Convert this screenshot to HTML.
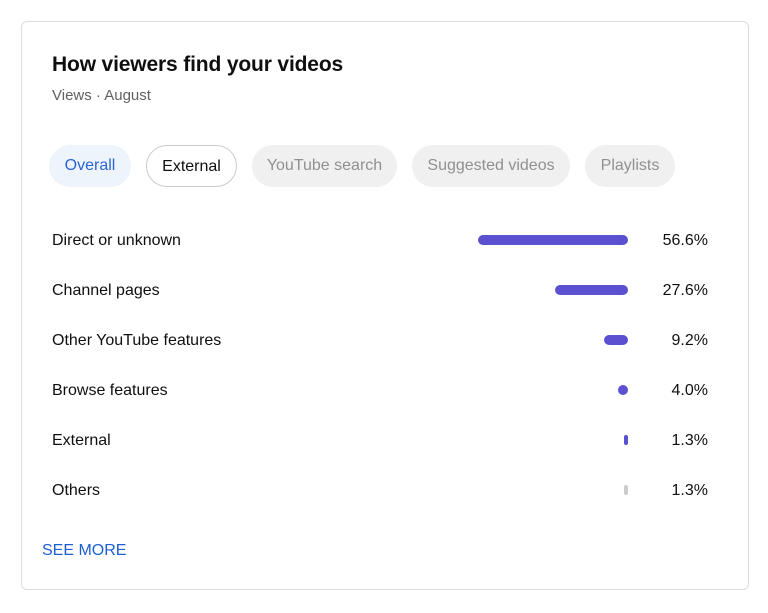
<!DOCTYPE html>
<html><head><style>
body{margin:0;background:#fff;font-family:"Liberation Sans",Arial,sans-serif;width:768px;height:613px;position:relative;overflow:hidden}
.card{position:absolute;left:21px;top:21px;width:728px;height:569px;border:1px solid #dcdcdc;border-radius:6px;box-sizing:border-box}
.t{position:absolute;left:52px;top:53px;font-size:21px;font-weight:bold;color:#0f0f0f;letter-spacing:-0.15px}
.s{position:absolute;left:52px;top:87px;font-size:15px;color:#606060}
.chip{position:absolute;top:145px;height:42px;line-height:42px;border-radius:21px;font-size:16px;text-align:center;box-sizing:border-box}
.row{position:absolute;left:52px;font-size:16px;color:#0f0f0f}
.bar{position:absolute;height:10px;border-radius:5px;background:#5b51d0}
.p{position:absolute;right:60px;font-size:16px;color:#0f0f0f;text-align:right}
.more{position:absolute;left:42px;top:542px;font-size:16px;color:#1a5fd6;letter-spacing:0}
</style></head><body>
<div class="card"></div>
<div class="t">How viewers find your videos</div>
<div class="s">Views · August</div>
<div class="chip" style="left:49px;width:82px;background:#eef4fc;color:#2a63d4">Overall</div>
<div class="chip" style="left:146px;width:91px;border:1px solid #ccc;color:#0f0f0f">External</div>
<div class="chip" style="left:252px;width:145px;background:#f0f0f0;color:#909090">YouTube search</div>
<div class="chip" style="left:412px;width:158px;background:#f0f0f0;color:#909090">Suggested videos</div>
<div class="chip" style="left:585px;width:90px;background:#f0f0f0;color:#909090">Playlists</div>

<div class="row" style="top:232px">Direct or unknown</div><div class="bar" style="left:478px;width:150px;top:235px"></div><div class="p" style="top:232px">56.6%</div>
<div class="row" style="top:282px">Channel pages</div><div class="bar" style="left:555px;width:73px;top:285px"></div><div class="p" style="top:282px">27.6%</div>
<div class="row" style="top:332px">Other YouTube features</div><div class="bar" style="left:604px;width:24px;top:335px"></div><div class="p" style="top:332px">9.2%</div>
<div class="row" style="top:382px">Browse features</div><div class="bar" style="left:618px;width:10px;top:385px"></div><div class="p" style="top:382px">4.0%</div>
<div class="row" style="top:432px">External</div><div class="bar" style="left:624px;width:4px;top:435px;border-radius:2px"></div><div class="p" style="top:432px">1.3%</div>
<div class="row" style="top:482px">Others</div><div class="bar" style="left:624px;width:4px;top:485px;border-radius:2px;background:#ccc"></div><div class="p" style="top:482px">1.3%</div>
<div class="more">SEE MORE</div>
</body></html>
